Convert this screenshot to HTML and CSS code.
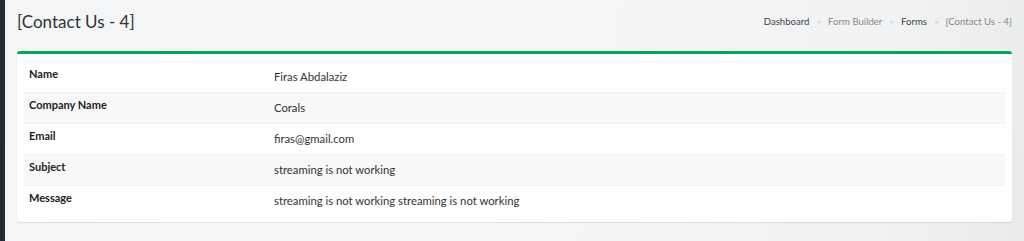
FILE: index.html
```html
<!DOCTYPE html>
<html>
<head>
<meta charset="utf-8">
<link rel="stylesheet" href="styles.css">
</head>
<body>
<div class="layout">
  <aside class="sidebar"></aside>
  <main class="content">
    <header class="page-header">
      <h1 class="page-title">[Contact Us - 4]</h1>
      <ol class="breadcrumb">
        <li class="crumb link">Dashboard</li>
        <li class="sep">&gt;</li>
        <li class="crumb">Form Builder</li>
        <li class="sep">&gt;</li>
        <li class="crumb link">Forms</li>
        <li class="sep">&gt;</li>
        <li class="crumb">[Contact Us - 4]</li>
      </ol>
    </header>
    <section class="card">
      <table class="details">
        <tr><th>Name</th><td>Firas Abdalaziz</td></tr>
        <tr><th>Company Name</th><td>Corals</td></tr>
        <tr><th>Email</th><td>firas@gmail.com</td></tr>
        <tr><th>Subject</th><td>streaming is not working</td></tr>
        <tr><th>Message</th><td>streaming is not working streaming is not working</td></tr>
      </table>
    </section>
  </main>
</div>
</body>
</html>
```
FILE: styles.css
```css
html, body {
  margin: 0;
  padding: 0;
  height: 100%;
}
body {
  font-family: Lato, "Noto Sans", sans-serif;
  color: #333;
  background: #f3f4f5;
}
.layout {
  display: flex;
  min-height: 241px;
}
.sidebar {
  width: 5px;
  background: #222d3a;
  flex: none;
}
.content {
  flex: 1;
  padding: 0 12px 0 12px;
  background: linear-gradient(100deg, #f4f5f6 0%, #f7f7f8 40%, #f1f2f3 85%, #e9eaec 100%);
}
.page-header {
  display: flex;
  align-items: center;
  justify-content: space-between;
  height: 42px;
}
.page-title {
  margin: 0;
  font-weight: 400;
  font-size: 17px;
  color: #333;
}
.breadcrumb {
  list-style: none;
  margin: 0;
  padding: 2px 0 0 0;
  display: flex;
  gap: 7px;
  font-size: 9.6px;
  color: #888;
}
.crumb.link { color: #444; }
.sep { color: #bbb; font-size: 8px; line-height: 13px; }
.card {
  margin-top: 9px;
  background: #fff;
  border-top: 3px solid #00a65a;
  border-radius: 3px;
  box-shadow: 0 1px 1px rgba(0,0,0,0.1);
  padding: 7px 7px 6px 7px;
}
.details {
  width: 100%;
  border-collapse: collapse;
  font-size: 11.3px;
  line-height: 16px;
}
.details tr {
  border-top: 1px solid #f2f2f2;
}
.details tr:nth-child(even) {
  background: #f8f8f8;
}
.details th {
  text-align: left;
  width: 235px;
  padding: 4px 5px 10px 5px;
  font-weight: 700;
  font-size: 11px;
  color: #222;
  vertical-align: top;
}
.details td {
  padding: 7px 5px 7px 5px;
  color: #333;
}
```
